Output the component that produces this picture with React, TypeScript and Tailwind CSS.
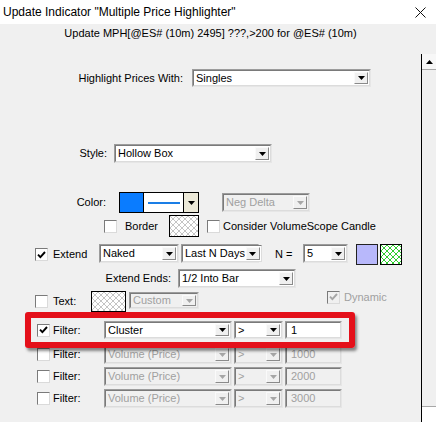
import type { ReactNode } from 'react';

const FONT = "font-['Liberation_Sans',Arial,sans-serif]";

function Arrow({ disabled, up }: { disabled?: boolean; up?: boolean }) {
  return (
    <svg width="7" height="4" viewBox="0 0 7 4">
      <path d={up ? 'M0 4h7L3.5 0z' : 'M0 0h7L3.5 4z'} fill={disabled ? '#a6a6a6' : '#000'} />
    </svg>
  );
}

function Combo({ text, size, disabled }: { text: string; size: string; disabled?: boolean }) {
  return (
    <div className={`${size} flex shrink-0 border border-t-[#9c9c9c] border-l-[#9c9c9c] border-r-[#e6e6e6] border-b-[#e6e6e6]`}>
      <div
        className={`flex flex-1 items-stretch border border-t-[#7a7a7a] border-l-[#7a7a7a] border-r-[#dcdcdc] border-b-[#dcdcdc] ${
          disabled ? 'bg-[#f0f0f0] text-[#a0a0a0]' : 'bg-white text-black'
        }`}
      >
        <span className="flex flex-1 items-center overflow-hidden whitespace-nowrap pl-[2px]">{text}</span>
        <span className="m-px flex w-[14px] items-center justify-center border border-t-[#fafafa] border-l-[#fafafa] border-r-[#8a8a8a] border-b-[#8a8a8a] bg-[#f0f0f0]">
          <Arrow disabled={disabled} />
        </span>
      </div>
    </div>
  );
}

function Field({ text, size, disabled }: { text: string; size: string; disabled?: boolean }) {
  return (
    <div className={`${size} flex shrink-0 border border-t-[#9c9c9c] border-l-[#9c9c9c] border-r-[#e6e6e6] border-b-[#e6e6e6]`}>
      <div
        className={`flex flex-1 items-center border border-t-[#7a7a7a] border-l-[#7a7a7a] border-r-[#dcdcdc] border-b-[#dcdcdc] pl-[4px] ${
          disabled ? 'bg-[#f0f0f0] text-[#a0a0a0]' : 'bg-white text-black'
        }`}
      >
        {text}
      </div>
    </div>
  );
}

function Check({ checked, disabled }: { checked?: boolean; disabled?: boolean }) {
  return (
    <span
      className={`flex h-[13px] w-[13px] shrink-0 items-center justify-center border border-t-[#7a7a7a] border-l-[#7a7a7a] border-r-[#dadada] border-b-[#dadada] ${
        disabled ? 'bg-[#f0f0f0]' : 'bg-white'
      }`}
    >
      {checked && (
        <svg width="9" height="8" viewBox="0 0 9 8">
          <path d="M1 3.6l2.4 2.5L8 1" stroke={disabled ? '#a6a6a6' : '#000'} strokeWidth="1.9" fill="none" />
        </svg>
      )}
    </span>
  );
}

function Hatch({ id, size, color }: { id: string; size: string; color: string }) {
  return (
    <div className={`${size} shrink-0 border border-black bg-white`}>
      <svg width="100%" height="100%">
        <defs>
          <pattern id={id} width="6" height="6" patternUnits="userSpaceOnUse">
            <path d="M0 0L6 6M6 0L0 6" stroke={color} strokeWidth="0.9" />
          </pattern>
        </defs>
        <rect width="100%" height="100%" fill={`url(#${id})`} />
      </svg>
    </div>
  );
}

function FilterRow({ children, className }: { children: ReactNode; className?: string }) {
  return <div className={`flex h-[19px] items-center ${className ?? ''}`}>{children}</div>;
}

export default function App() {
  return (
    <div className={`${FONT} flex h-[422px] w-[436px] flex-col overflow-hidden text-[11px] text-black`}>
      <div className="flex h-[24px] shrink-0 items-center justify-between bg-white pl-[3px] pr-[10px]">
        <span className="text-[12px]">Update Indicator "Multiple Price Highlighter"</span>
        <svg width="11" height="11" viewBox="0 0 11 11">
          <path d="M0.5 0.5l10 10M10.5 0.5l-10 10" stroke="#111" strokeWidth="1" />
        </svg>
      </div>

      <div className="flex flex-1 bg-[#f0f0f0]">
        <div className="flex w-[421px] flex-col">
          <div className="mt-[3px] h-[13px] text-center leading-[13px]">
            Update MPH[@ES# (10m) 2495] ???,&gt;200 for @ES# (10m)
          </div>

          <div className="mt-[29px] flex h-[18px] items-center">
            <span className="w-[183px] text-right">Highlight Prices With:</span>
            <Combo size="ml-[9px] w-[179px] h-[18px]" text="Singles" />
          </div>

          <div className="mt-[57px] flex h-[19px] items-center">
            <span className="w-[107px] text-right">Style:</span>
            <Combo size="ml-[7px] w-[158px] h-[19px]" text="Hollow Box" />
          </div>

          <div className="mt-[29px] flex h-[21px] items-center">
            <span className="w-[106px] text-right">Color:</span>
            <div className="ml-[13px] flex h-[21px] w-[80px] border border-black">
              <span className="w-[23px] bg-[#0a7cff]" />
              <span className="flex w-[40px] items-center justify-center border-l border-black bg-white">
                <span className="h-[2px] w-[32px] bg-[#1a7ee6]" />
              </span>
              <span className="flex flex-1 items-center justify-center border-l border-black bg-[#ece9d8]">
                <Arrow />
              </span>
            </div>
            <Combo size="ml-[23px] w-[88px] h-[19px]" text="Neg Delta" disabled />
          </div>

          <div className="mt-[2px] flex h-[22px] items-center">
            <span className="ml-[104px]">
              <Check />
            </span>
            <span className="ml-[8px] w-[44px]">Border</span>
            <Hatch id="h1" size="w-[30px] h-[22px]" color="#bdbdbd" />
            <span className="ml-[8px]">
              <Check />
            </span>
            <span className="ml-[3px]">Consider VolumeScope Candle</span>
          </div>

          <div className="mt-[7px] flex h-[21px] items-start">
            <span className="ml-[35px] self-center">
              <Check checked />
            </span>
            <span className="ml-[5px] w-[46px] self-center">Extend</span>
            <Combo size="w-[80px] h-[19px]" text="Naked" />
            <Combo size="ml-[2px] w-[78px] h-[19px]" text="Last N Days" />
            <span className="ml-[16px] w-[28px] self-center">N =</span>
            <Combo size="w-[45px] h-[19px]" text="5" />
            <span className="ml-[8px] h-[21px] w-[22px] border border-[#222] bg-[#b8b8fb]" />
            <span className="ml-[2px]">
              <Hatch id="h2" size="w-[22px] h-[21px]" color="#18c818" />
            </span>
          </div>

          <div className="mt-[4px] flex h-[19px] items-center">
            <span className="w-[171px] text-right">Extend Ends:</span>
            <Combo size="ml-[7px] w-[118px] h-[19px]" text="1/2 Into Bar" />
          </div>

          <div className="mt-[3px] flex h-[21px] items-start">
            <span className="ml-[35px] self-center">
              <Check />
            </span>
            <span className="ml-[5px] w-[38px] self-center">Text:</span>
            <Hatch id="h3" size="w-[35px] h-[21px]" color="#bdbdbd" />
            <span className="ml-[3px] mt-[1px]">
              <Combo size="w-[70px] h-[17px]" text="Custom" disabled />
            </span>
            <span className="ml-[128px] flex h-[12px] items-center">
              <Check checked disabled />
              <span className="ml-[4px] text-[#a0a0a0]">Dynamic</span>
            </span>
          </div>

          <div className="relative z-10 ml-[25px] flex h-[36px] w-[330px] items-center rounded-[3px] border-[6px] border-[#e4101a] pl-[6px] shadow-[2px_3px_3px_rgba(0,0,0,0.45)]">
            <Check checked />
            <span className="ml-[3px] w-[51px]">Filter:</span>
            <Combo size="w-[128px] h-[18px]" text="Cluster" />
            <Combo size="ml-[2px] w-[49px] h-[18px]" text=">" />
            <Field size="ml-[2px] w-[57px] h-[18px]" text="1" />
          </div>

          {['1000', '2000', '3000'].map((v, i) => (
            <FilterRow key={v} className={i === 0 ? 'mt-[-3px] pl-[37px]' : 'mt-[3px] pl-[37px]'}>
              <Check />
              <span className="ml-[3px] w-[51px]">Filter:</span>
              <Combo size="w-[128px] h-[19px]" text="Volume (Price)" disabled />
              <Combo size="ml-[2px] w-[49px] h-[19px]" text=">" disabled />
              <Field size="ml-[2px] w-[57px] h-[19px]" text={v} disabled />
            </FilterRow>
          ))}
        </div>

        <div className="mt-[30px] flex w-[15px] flex-col border-l border-black">
          <div className="flex h-[16px] items-center justify-center border-b border-[#a8a8a8] bg-[#f7f7f7]">
            <Arrow up />
          </div>
          <div className="flex-1 bg-[#f0f0f0]" />
          <div className="h-[16px] border-t border-[#a8a8a8] bg-white" />
        </div>
      </div>
    </div>
  );
}
